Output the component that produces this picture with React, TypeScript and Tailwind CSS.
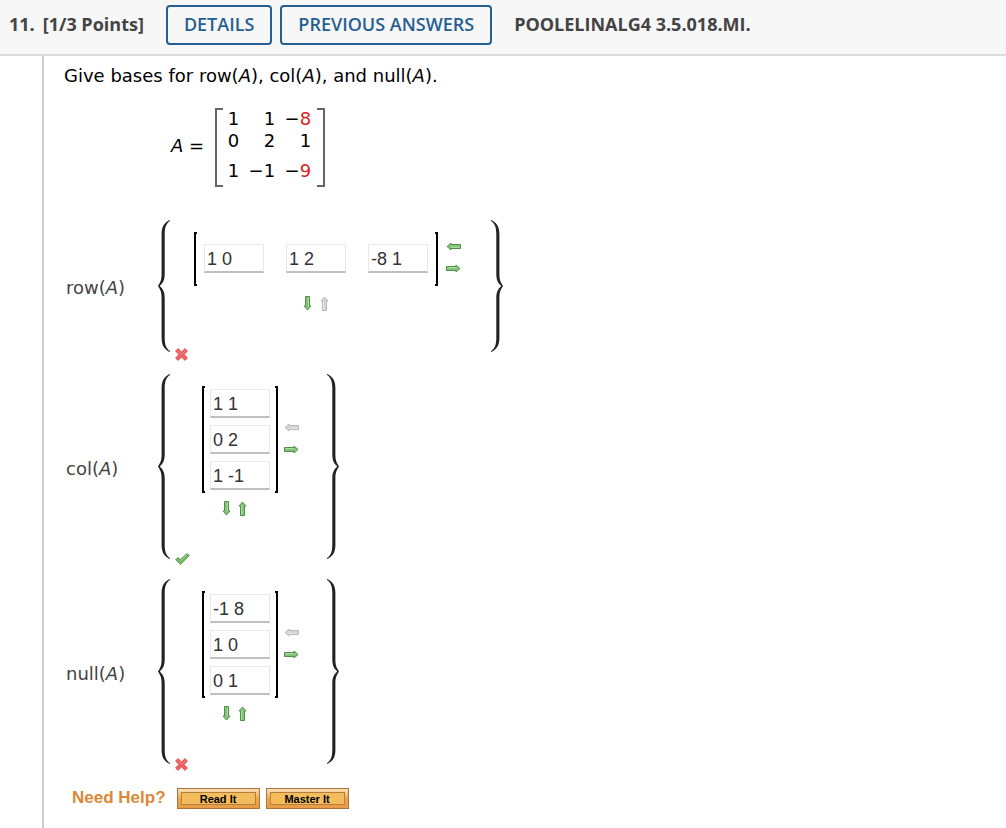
import React from 'react';

type Direction = 'left' | 'right' | 'up' | 'down';

interface AnswerSetProps {
  name: string;
  values: string[];
  layout: 'row' | 'column';
  correct: boolean;
  disabled?: Direction[];
}

const Brace: React.FC<{ height: number; flip?: boolean }> = ({ height, flip }) => {
  const m = height / 2;
  const d = [
    `M12 0 C7 2 3.6 6 3.6 14 V${m - 12} C3.6 ${m - 6} 2.5 ${m - 4} 0 ${m}`,
    `C2.5 ${m + 4} 3.6 ${m + 6} 3.6 ${m + 12} V${height - 14} C3.6 ${height - 6} 7 ${height - 2} 12 ${height}`,
    `V${height - 1} C8.5 ${height - 3} 6.7 ${height - 7} 6.7 ${height - 14} V${m + 12} C6.7 ${m + 6} 5 ${m + 3} 1.8 ${m}`,
    `C5 ${m - 3} 6.7 ${m - 6} 6.7 ${m - 12} V14 C6.7 7 8.5 3 12 1 Z`,
  ].join(' ');
  return (
    <svg width="12" height={height} viewBox={`0 0 12 ${height}`} className={flip ? 'shrink-0 -scale-x-100' : 'shrink-0'} aria-hidden="true">
      <path d={d} fill="#222" />
    </svg>
  );
};

const rotation: Record<Direction, string> = {
  left: 'rotate(180 7.5 7.5)',
  right: '',
  up: 'rotate(-90 7.5 7.5)',
  down: 'rotate(90 7.5 7.5)',
};

const ArrowButton: React.FC<{ direction: Direction; label: string; disabled?: boolean }> = ({ direction, label, disabled }) => {
  const vertical = direction === 'up' || direction === 'down';
  return (
    <button type="button" aria-label={label} disabled={disabled} className="block">
      <svg
        width={vertical ? 9 : 15}
        height={vertical ? 15 : 9}
        viewBox={vertical ? '3 0 9 15' : '0 3 15 9'}
      >
        <g transform={rotation[direction]}>
          <path
            d="M.5 5.5 H10 V4 L14 7.5 L10 11 V9.5 H.5 Z"
            fill={disabled ? '#d6d6d6' : '#86c47c'}
            stroke={disabled ? '#b8b8b8' : '#4f9046'}
          />
          <path d="M1.5 6.5 H10" stroke={disabled ? '#e8e8e8' : '#aedca6'} />
        </g>
      </svg>
    </button>
  );
};

const Mark: React.FC<{ correct: boolean }> = ({ correct }) =>
  correct ? (
    <svg width="15" height="12" viewBox="0 0 15 12" role="img" aria-label="Correct">
      <path d="M.6 6.8 L2.9 4.4 L5.3 6.6 L12 .6 L14.4 2.5 L5.5 11.5 Z" fill="#72b765" stroke="#559b4a" strokeWidth=".8" />
      <path d="M5.3 8.1 L12.2 1.8" stroke="#9cd492" />
    </svg>
  ) : (
    <svg width="13" height="13" viewBox="0 0 13 13" role="img" aria-label="Incorrect">
      <path
        d="M.6 3 L3 .6 L6.5 3.9 L10 .6 L12.4 3 L9.1 6.5 L12.4 10 L10 12.4 L6.5 9.1 L3 12.4 L.6 10 L3.9 6.5 Z"
        fill="#ec6060"
        stroke="#dc4545"
        strokeWidth=".8"
      />
      <path d="M2.4 2.6 L6.5 6.4 L10.6 2.6" fill="none" stroke="#f38a8a" />
    </svg>
  );

const AnswerSet: React.FC<AnswerSetProps> = ({ name, values, layout, correct, disabled = [] }) => {
  const isRow = layout === 'row';
  const braceHeight = isRow ? 132 : 185;
  return (
    <div className="flex items-start">
      <div className="flex items-center">
        <span className="w-[92px] shrink-0 pt-1 text-[#444]">
          {name}(<i>A</i>)
        </span>
        <Brace height={braceHeight} />
      </div>
      <div className="pl-[5px] pt-3">
        <div className={isRow ? 'flex items-start gap-2 pl-[19px] pr-[30px]' : 'flex items-start gap-1.5 pl-[27px] pr-7'}>
          <div>
            <div className="flex">
              <div className="w-[3px] border-y-2 border-l-2 border-black" />
              <div className={isRow ? 'flex gap-[22px] px-[7px] pt-3 pb-[13px]' : 'flex flex-col gap-[7px] px-[5px] py-[3px]'}>
                {values.map((value, i) => (
                  <input
                    key={i}
                    type="text"
                    defaultValue={value}
                    aria-label={`${name}(A) entry ${i + 1}`}
                    className="block h-[29px] w-[60px] border border-b-2 border-[#e8e8e8] border-b-[#c0c0c0] bg-white px-0.5 pt-0.5 font-['Liberation_Sans',sans-serif] text-[18px] text-[#333]"
                  />
                ))}
              </div>
              <div className="w-[3px] border-y-2 border-r-2 border-black" />
            </div>
            <div className={isRow ? 'mt-2.5 flex justify-center gap-2' : 'mt-2 flex justify-center gap-[7px] pr-3'}>
              <ArrowButton direction="down" label="Add row" disabled={disabled.includes('down')} />
              <ArrowButton direction="up" label="Remove row" disabled={disabled.includes('up')} />
            </div>
          </div>
          <div className={isRow ? 'flex flex-col gap-[13px] pt-2.5' : 'flex flex-col gap-[13px] pt-[37px]'}>
            <ArrowButton direction="left" label="Remove column" disabled={disabled.includes('left')} />
            <ArrowButton direction="right" label="Add column" disabled={disabled.includes('right')} />
          </div>
        </div>
        <div className="mt-[37px] flex h-[13px]">
          <Mark correct={correct} />
        </div>
      </div>
      <Brace height={braceHeight} flip />
    </div>
  );
};

const HelpButton: React.FC<{ children: React.ReactNode }> = ({ children }) => (
  <button
    type="button"
    className="h-[21px] w-[83px] border border-[#a9743a] bg-linear-to-b from-[#fbe0b5] via-[#efa550] to-[#e89a45] p-[3px]"
  >
    <span className="block h-[13px] border border-[#b5803f] bg-[#f4bd5c] text-[11px] leading-[12px] font-bold text-black">
      {children}
    </span>
  </button>
);

const matrix = [
  [1, 1, -8],
  [0, 2, 1],
  [1, -1, -9],
];

const CoefficientMatrix: React.FC = () => (
  <div className="flex items-center gap-[11px] pl-[107px]">
    <span className="pb-1">
      <i>A</i> =
    </span>
    <div className="flex">
      <div className="w-2 border-y-2 border-l-2 border-[#666]" />
      <div className="pb-[5px] leading-[22px]">
        {matrix.map((row, r) => (
          <div key={r} className={r === 2 ? 'mt-2 flex' : 'flex'}>
            {row.map((n, c) => (
              <span key={c} className={c === 0 ? 'w-4 text-right' : 'w-9 text-right'}>
                {n < 0 && '−'}
                <span className={n < -1 ? 'text-[#d9261c]' : ''}>{Math.abs(n)}</span>
              </span>
            ))}
          </div>
        ))}
      </div>
      <div className="ml-1.5 w-2 border-y-2 border-r-2 border-[#666]" />
    </div>
  </div>
);

export default function App() {
  return (
    <div className="flex min-h-screen flex-col bg-white font-['DejaVu_Sans',sans-serif] text-[18px] leading-6 text-black">
      <header className="flex items-center border-b-2 border-[#ddd] bg-[#f7f7f7] pt-[5px] pb-[9px] pl-[9px] font-['Open_Sans',sans-serif] font-bold text-[#444]">
        <span className="pb-0.5">11.</span>
        <span className="ml-2 pb-0.5">[1/3 Points]</span>
        <button type="button" className="ml-[22px] h-10 rounded-[4px] border-2 border-[#266092] px-4 pb-0.5 font-semibold text-[#266092]">
          DETAILS
        </button>
        <button type="button" className="ml-2 h-10 rounded-[4px] border-2 border-[#266092] px-4 pb-0.5 font-semibold text-[#266092]">
          PREVIOUS ANSWERS
        </button>
        <span className="ml-[22px] pb-0.5">POOLELINALG4 3.5.018.MI.</span>
      </header>
      <main className="ml-[42px] grow border-l-2 border-[#ccc] pt-2 pl-5">
        <p>
          Give bases for row(<i>A</i>), col(<i>A</i>), and null(<i>A</i>).
        </p>
        <div className="mt-5">
          <CoefficientMatrix />
        </div>
        <div className="mt-[33px] flex flex-col gap-[13px] pl-0.5">
          <AnswerSet name="row" values={['1 0', '1 2', '-8 1']} layout="row" correct={false} disabled={['up']} />
          <AnswerSet name="col" values={['1 1', '0 2', '1 -1']} layout="column" correct disabled={['left']} />
          <AnswerSet name="null" values={['-1 8', '1 0', '0 1']} layout="column" correct={false} disabled={['left']} />
        </div>
        <div className="mt-4 flex items-center pl-2 font-['Liberation_Sans',sans-serif]">
          <span className="mr-[11px] text-[17px] leading-[22px] font-bold text-[#dd8833]">Need Help?</span>
          <div className="flex gap-1.5">
            <HelpButton>Read It</HelpButton>
            <HelpButton>Master It</HelpButton>
          </div>
        </div>
      </main>
    </div>
  );
}
